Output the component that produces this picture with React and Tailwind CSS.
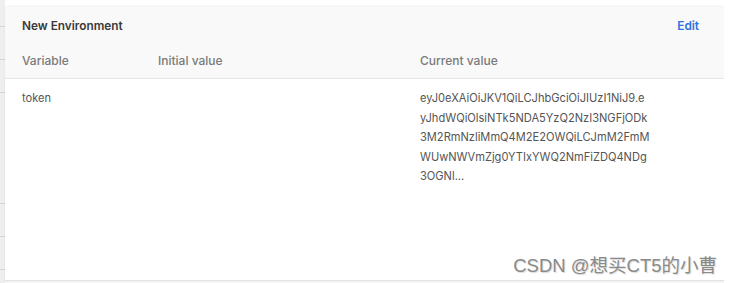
const lines = [
  'eyJ0eXAiOiJKV1QiLCJhbGciOiJIUzI1NiJ9.e',
  'yJhdWQiOlsiNTk5NDA5YzQ2NzI3NGFjODk',
  '3M2RmNzliMmQ4M2E2OWQiLCJmM2FmM',
  'WUwNWVmZjg0YTIxYWQ2NmFiZDQ4NDg',
  '3OGNl...',
]

export default function App() {
  return (
    <div className="w-[734px] h-[283px] bg-white flex overflow-hidden" style={{ fontFamily: 'Inter, "Noto Sans CJK SC", sans-serif' }}>
      {/* sidebar edge behind the panel */}
      <div className="w-[5px] h-full bg-[#efefef] flex flex-col">
        <div className="h-[27px] border-b border-[#d6d6d6]" />
        <div className="h-[33px] border-b border-[#d6d6d6]" />
        <div className="h-[33px] border-b border-[#d6d6d6]" />
        <div className="h-[111px] border-b border-[#d6d6d6]" />
        <div className="h-[33px] border-b border-[#d6d6d6]" />
        <div className="h-[33px] border-b border-[#d6d6d6]" />
      </div>

      <div className="w-[719px] pt-[7px] flex flex-col">
        <div className="flex-1 flex flex-col bg-white shadow-[1px_0_3px_rgba(0,0,0,0.12)]">
          <div className="bg-[#f9f9f9] border-b border-[#e6e6e6] h-[72px] flex flex-col pt-[3px]">
            <div className="h-[35px] flex items-center justify-between pl-[17px] pr-[25px]">
              <span className="text-[11.8px] font-semibold text-[#3a3a3a]">New Environment</span>
              <span className="text-[11.8px] font-semibold text-[#2a72e0]">Edit</span>
            </div>
            <div className="flex items-center h-[35px] pl-[17px] text-[12px] text-[#7a7a7a] font-medium">
              <span className="w-[136px]">Variable</span>
              <span className="w-[262px]">Initial value</span>
              <span>Current value</span>
            </div>
          </div>
          <div className="flex pl-[17px] pt-[10px] text-[11.1px] text-[#555555] leading-[19.5px] flex-1 relative">
            <span className="w-[136px]">token</span>
            <span className="w-[262px]" />
            <div className="flex flex-col">
              {lines.map((l) => (
                <span key={l}>{l}</span>
              ))}
            </div>
            <span
              className="absolute right-[7px] bottom-[5px] text-[18.5px] text-[#8a8a8a] [text-shadow:1px_1px_1px_rgba(0,0,0,0.15)]"
              style={{ fontFamily: '"Liberation Sans", "Noto Sans CJK SC", sans-serif' }}
            >
              CSDN @想买CT5的小曹
            </span>
          </div>
          <div className="h-[3px] border-t border-[#e2e2e2] bg-[#f4f4f4]" />
        </div>
      </div>
      <div className="flex-1 bg-white" />
    </div>
  )
}
